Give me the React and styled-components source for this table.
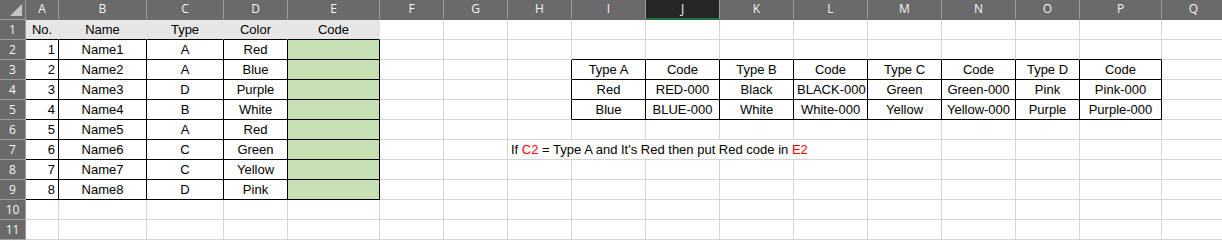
import React from "react";
import styled, { createGlobalStyle } from "styled-components";

const GlobalStyle = createGlobalStyle`
  html, body {
    margin: 0;
    padding: 0;
    background: #ffffff;
    overflow: hidden;
  }
  body {
    width: 1222px;
    height: 241px;
  }
`;

const GRID = "#d4d4d4";
const INK = "#000000";
const HEAD_BG = "#6a6a6a";
const HEAD_LINE = "#9c9c9c";

const COLUMNS = [
  ["A", 33], ["B", 88], ["C", 77], ["D", 64], ["E", 92], ["F", 64],
  ["G", 64], ["H", 64], ["I", 74], ["J", 74], ["K", 74], ["L", 74],
  ["M", 74], ["N", 74], ["O", 64], ["P", 82], ["Q", 64],
];
const ROW_COUNT = 11;
const ACTIVE_COLUMN = "J";

const FILL_HEAD = "#e7e6e6";
const FILL_CODE = "#c6e0b4";

// Ranges that carry thin black borders: [firstCol, firstRow, lastCol, lastRow]
const BORDERED = [
  [0, 2, 4, 9],
  [8, 3, 15, 5],
];

const inBordered = (c, r) =>
  BORDERED.some(([c0, r0, c1, r1]) => c >= c0 && c <= c1 && r >= r0 && r <= r1);

const names = ["Name1", "Name2", "Name3", "Name4", "Name5", "Name6", "Name7", "Name8"];
const types = ["A", "A", "D", "B", "A", "C", "C", "D"];
const colors = ["Red", "Blue", "Purple", "White", "Red", "Green", "Yellow", "Pink"];

const CELLS = {};
const put = (ref, value) => {
  CELLS[ref] = value;
};

["No.", "Name", "Type", "Color", "Code"].forEach((t, i) =>
  put(`${"ABCDE"[i]}1`, { text: t, fill: FILL_HEAD })
);
names.forEach((n, i) => {
  const row = i + 2;
  put(`A${row}`, { text: String(i + 1), align: "right" });
  put(`B${row}`, { text: n });
  put(`C${row}`, { text: types[i] });
  put(`D${row}`, { text: colors[i] });
  put(`E${row}`, { text: "", fill: FILL_CODE });
});

const lookup = [
  ["Type A", "Code", "Type B", "Code", "Type C", "Code", "Type D", "Code"],
  ["Red", "RED-000", "Black", "BLACK-000", "Green", "Green-000", "Pink", "Pink-000"],
  ["Blue", "BLUE-000", "White", "White-000", "Yellow", "Yellow-000", "Purple", "Purple-000"],
];
lookup.forEach((line, i) =>
  line.forEach((t, j) => put(`${"IJKLMNOP"[j]}${i + 3}`, { text: t }))
);

put("H7", {
  span: 5,
  align: "left",
  rich: [
    ["If ", false],
    ["C2", true],
    [" = Type A and It's Red then put Red code in ", false],
    ["E2", true],
  ],
});

const Sheet = styled.div`
  display: grid;
  grid-template-columns: ${(p) => p.$columns};
  grid-auto-rows: 20px;
  width: max-content;
  font-family: "Liberation Sans", Arial, sans-serif;
`;

const Corner = styled.div`
  box-sizing: border-box;
  background: ${HEAD_BG};
  border-right: 1px solid ${HEAD_LINE};
  border-bottom: 1px solid ${HEAD_LINE};
  display: flex;
  align-items: flex-end;
  justify-content: flex-end;
  padding: 0 3px 3px 0;
`;

const ColHeader = styled.div`
  box-sizing: border-box;
  background: ${(p) => (p.$active ? "#262626" : HEAD_BG)};
  border-right: 1px solid ${HEAD_LINE};
  border-bottom: 2px solid ${(p) => (p.$active ? "#217346" : HEAD_BG)};
  color: #f4f4f4;
  font-family: "Open Sans", "Liberation Sans", sans-serif;
  font-size: 12px;
  line-height: 18px;
  text-align: center;
  overflow: hidden;
`;

const RowHeader = styled.div`
  box-sizing: border-box;
  background: ${HEAD_BG};
  border-right: 1px solid ${HEAD_LINE};
  border-bottom: 1px solid ${HEAD_LINE};
  color: #f4f4f4;
  font-family: "Open Sans", "Liberation Sans", sans-serif;
  font-size: 12px;
  line-height: 19px;
  text-align: center;
`;

const Cell = styled.div`
  box-sizing: border-box;
  grid-column: ${(p) => (p.$span > 1 ? `span ${p.$span}` : "auto")};
  background: ${(p) => p.$fill || "transparent"};
  border-right: 1px solid ${(p) => (p.$rightDark ? INK : p.$fill || GRID)};
  border-bottom: 1px solid ${(p) => (p.$bottomDark ? INK : p.$fill || GRID)};
  padding: 1px 3px 0 3px;
  font-size: 13px;
  line-height: 18px;
  color: ${INK};
  text-align: ${(p) => p.$align || "center"};
  white-space: nowrap;
  overflow: ${(p) => (p.$span > 1 ? "visible" : "hidden")};
`;

const Ref = styled.span`
  color: ${(p) => (p.$hot ? "#ff0000" : INK)};
`;

function SelectAll() {
  return (
    <svg width="12" height="12" viewBox="0 0 12 12" aria-hidden="true">
      <polygon points="0,12 12,12 12,0" fill="#c4c4c4" />
    </svg>
  );
}

export default function App() {
  const template = ["26px", ...COLUMNS.map(([, w]) => `${w}px`)].join(" ");
  const rows = Array.from({ length: ROW_COUNT }, (_, i) => i + 1);

  return (
    <>
      <GlobalStyle />
      <Sheet $columns={template}>
        <Corner>
          <SelectAll />
        </Corner>
        {COLUMNS.map(([letter]) => (
          <ColHeader key={letter} $active={letter === ACTIVE_COLUMN}>
            {letter}
          </ColHeader>
        ))}
        {rows.map((r) => {
          const out = [<RowHeader key={`h${r}`}>{r}</RowHeader>];
          let skip = 0;
          COLUMNS.forEach(([letter], c) => {
            if (skip > 0) {
              skip -= 1;
              return;
            }
            const data = CELLS[`${letter}${r}`] || {};
            const span = data.span || 1;
            const last = c + span - 1;
            skip = span - 1;
            out.push(
              <Cell
                key={`${letter}${r}`}
                $span={span}
                $fill={data.fill}
                $align={data.align}
                $rightDark={inBordered(last, r) || inBordered(last + 1, r)}
                $bottomDark={inBordered(c, r) || inBordered(c, r + 1)}
              >
                {data.rich
                  ? data.rich.map(([t, hot], i) => (
                      <Ref key={i} $hot={hot}>
                        {t}
                      </Ref>
                    ))
                  : data.text}
              </Cell>
            );
          });
          return out;
        })}
      </Sheet>
    </>
  );
}
